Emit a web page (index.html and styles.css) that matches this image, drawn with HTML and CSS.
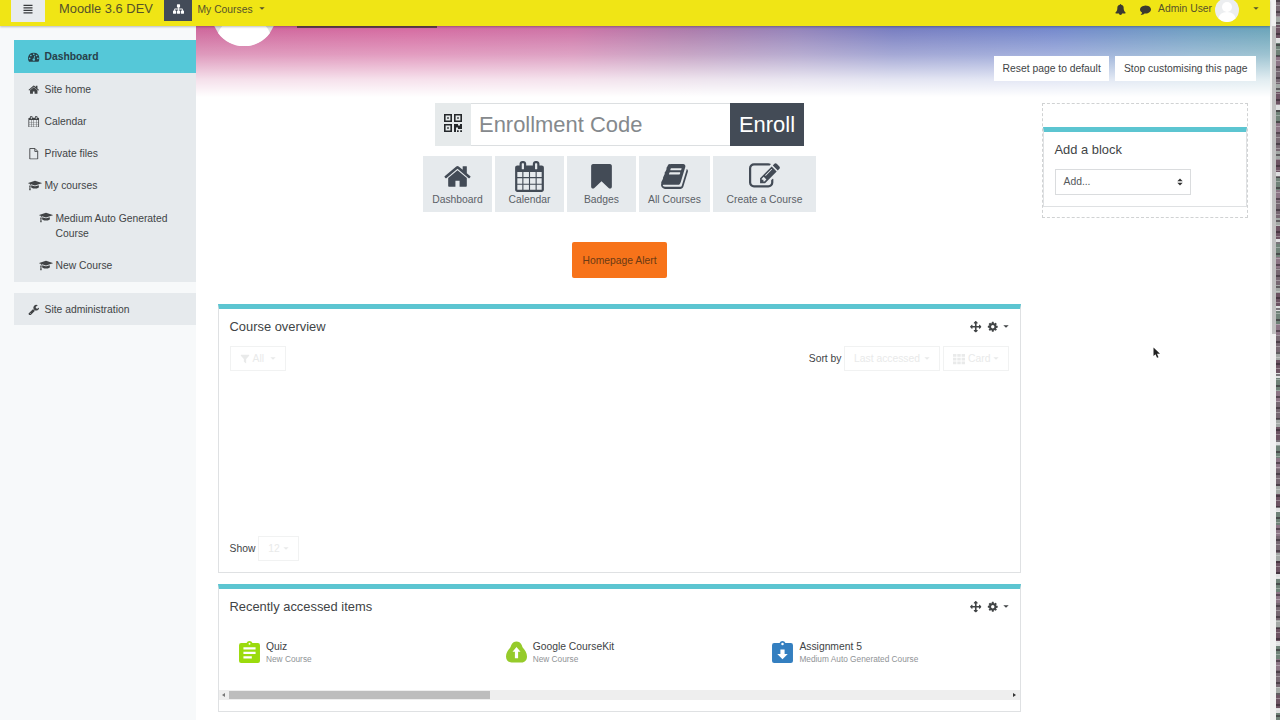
FILE: index.html
```html
<!DOCTYPE html>
<html lang="en">
<head>
    <meta charset="UTF-8">
    <meta name="viewport" content="width=device-width, initial-scale=1.0">
    <title>Dashboard</title>
    <link rel="stylesheet" href="styles.css">
</head>
<body>
    <svg class="sprite">
        <symbol id="home" viewBox="0 0 1792 1792"><path d="M1472 992v480q0 26-19 45t-45 19h-384v-384h-256v384h-384q-26 0-45-19t-19-45v-480q0-1 .5-3t.5-3l575-474 575 474q1 2 1 6zm223-69l-62 74q-8 9-21 11h-3q-13 0-21-7l-692-577-692 577q-12 8-24 7-13-2-21-11l-62-74q-8-10-7-23.5t11-21.5l719-599q32-26 76-26t76 26l244 204v-195q0-14 9-23t23-9h192q14 0 23 9t9 23v408l219 182q10 8 11 21.5t-7 23.5z"/></symbol>
        <symbol id="bookmark" viewBox="0 0 1792 1792"><path d="M1420 128q23 0 44 9 33 13 52.5 41t19.5 62v1289q0 34-19.5 62t-52.5 41q-19 8-44 8-48 0-83-32l-441-424-441 424q-36 33-83 33-23 0-44-9-33-13-52.5-41t-19.5-62v-1289q0-34 19.5-62t52.5-41q21-9 44-9h1048z"/></symbol>
        <symbol id="calendar" viewBox="0 0 1792 1792"><path d="M192 1664h288v-288h-288v288zm352 0h320v-288h-320v288zm-352-352h288v-320h-288v320zm352 0h320v-320h-320v320zm-352-384h288v-288h-288v288zm736 736h320v-288h-320v288zm-384-736h320v-288h-320v288zm768 736h288v-288h-288v288zm-384-352h320v-320h-320v320zm-352-864v-288q0-13-9.5-22.5t-22.5-9.5h-64q-13 0-22.5 9.5t-9.5 22.5v288q0 13 9.5 22.5t22.5 9.5h64q13 0 22.5-9.5t9.5-22.5zm736 864h288v-320h-288v320zm-384-384h320v-288h-320v288zm384 0h288v-288h-288v288zm32-480v-288q0-13-9.5-22.5t-22.5-9.5h-64q-13 0-22.5 9.5t-9.5 22.5v288q0 13 9.5 22.5t22.5 9.5h64q13 0 22.5-9.5t9.5-22.5zm384-64v1280q0 52-38 90t-90 38h-1408q-52 0-90-38t-38-90v-1280q0-52 38-90t90-38h128v-96q0-66 47-113t113-47h64q66 0 113 47t47 113v96h384v-96q0-66 47-113t113-47h64q66 0 113 47t47 113v96h128q52 0 90 38t38 90z"/></symbol>
        <symbol id="cap" viewBox="0 0 2304 1792"><path d="M1774 836l18 316q4 69-82 128t-235 93.5-323 34.5-323-34.5-235-93.5-82-128l18-316 574 181q22 7 48 7t48-7zm530-324q0 23-22 31l-1120 352q-4 1-10 1t-10-1l-652-206q-43 34-71 111.5t-34 178.5q63 36 63 109 0 69-58 107l58 433q2 14-8 25-9 11-24 11h-192q-15 0-24-11-10-11-8-25l58-433q-58-38-58-107 0-73 65-111 11-207 98-330l-333-104q-22-8-22-31t22-31l1120-352q4-1 10-1t10 1l1120 352q22 8 22 31z"/></symbol>
        <symbol id="wrench" viewBox="0 0 1792 1792"><path d="M448 1472q0-26-19-45t-45-19-45 19-19 45 19 45 45 19 45-19 19-45zm644-420l-682 682q-37 37-90 37-52 0-91-37l-106-108q-38-36-38-90 0-53 38-91l681-681q39 98 114.5 173.5t173.5 114.5zm634-435q0 39-23 106-47 134-164.5 217.5t-258.5 83.5q-185 0-316.5-131.5t-131.5-316.5 131.5-316.5 316.5-131.5q58 0 121.5 16.5t107.5 46.5q16 11 16 28t-16 28l-293 169v224l193 107q5-3 79-48.5t135.5-81 70.5-35.5q15 0 23.5 10t8.5 25z"/></symbol>
        <symbol id="bell" viewBox="0 0 1792 1792"><path d="M1728 1408q0 52-38 90t-90 38h-448q0 106-75 181t-181 75-181-75-75-181h-448q-52 0-90-38t-38-90q50-42 91-88t85-119.5 74.5-158.5 50-206 19.5-260q0-152 117-282.5t307-158.5q-8-19-8-39 0-40 28-68t68-28 68 28 28 68q0 20-8 39 190 28 307 158.5t117 282.5q0 139 19.5 260t50 206 74.5 158.5 85 119.5 91 88z"/></symbol>
        <symbol id="comment" viewBox="0 0 1792 1792"><path d="M1792 896q0 174-120 321.5t-326 233-450 85.5q-70 0-145-8-198 175-460 242-49 14-114 22-17 2-30.5-9t-17.5-29v-1q-3-4-.5-12t2-10 4.5-9.5l6-9 7-8.5 8-9q7-8 31-34.5t34.5-38 31-39.5 32.5-51 27-59 26-76q-157-89-247.5-220t-90.5-281q0-130 71-248.5t191-204.5 286-136.5 348-50.5q244 0 450 85.5t326 233 120 321.5z"/></symbol>
        <symbol id="sitemap" viewBox="0 0 1792 1792"><path d="M1792 1248v320q0 40-28 68t-68 28h-320q-40 0-68-28t-28-68v-320q0-40 28-68t68-28h96v-192h-512v192h96q40 0 68 28t28 68v320q0 40-28 68t-68 28h-320q-40 0-68-28t-28-68v-320q0-40 28-68t68-28h96v-192h-512v192h96q40 0 68 28t28 68v320q0 40-28 68t-68 28h-320q-40 0-68-28t-28-68v-320q0-40 28-68t68-28h96v-192q0-52 38-90t90-38h512v-192h-96q-40 0-68-28t-28-68v-320q0-40 28-68t68-28h320q40 0 68 28t28 68v320q0 40-28 68t-68 28h-96v192h512q52 0 90 38t38 90v192h96q40 0 68 28t28 68z"/></symbol>
        <symbol id="move" viewBox="0 0 1792 1792"><path d="M1792 896q0 26-19 45l-256 256q-19 19-45 19t-45-19-19-45v-128h-384v384h128q26 0 45 19t19 45-19 45l-256 256q-19 19-45 19t-45-19l-256-256q-19-19-19-45t19-45 45-19h128v-384h-384v128q0 26-19 45t-45 19-45-19l-256-256q-19-19-19-45t19-45l256-256q19-19 45-19t45 19 19 45v128h384v-384h-128q-26 0-45-19t-19-45 19-45l256-256q19-19 45-19t45 19l256 256q19 19 19 45t-19 45-45 19h-128v384h384v-128q0-26 19-45t45-19 45 19l256 256q19 19 19 45z"/></symbol>
        <symbol id="cog" viewBox="0 0 1792 1792"><path d="M1152 896q0-106-75-181t-181-75-181 75-75 181 75 181 181 75 181-75 75-181zm512-109v222q0 12-8 23t-20 13l-185 28q-19 54-39 91 35 50 107 138 10 12 10 25t-9 23q-27 37-99 108t-94 71q-12 0-26-9l-138-108q-44 23-91 38-16 136-29 186-7 28-36 28h-222q-14 0-24.5-8.5t-11.5-21.5l-28-184q-49-16-90-37l-141 107q-10 9-25 9-14 0-25-11-126-114-165-168-7-10-7-23 0-12 8-23 15-21 51-66.5t54-70.5q-27-50-41-99l-183-27q-13-2-21-12.5t-8-23.5v-222q0-12 8-23t19-13l186-28q14-46 39-92-40-57-107-138-10-12-10-24 0-10 9-23 26-36 98.5-107.5t94.5-71.5q13 0 26 10l138 107q44-23 91-38 16-136 29-186 7-28 36-28h222q14 0 24.5 8.5t11.5 21.5l28 184q49 16 90 37l142-107q9-9 24-9 13 0 25 10 129 119 165 170 7 8 7 22 0 12-8 23-15 21-51 66.5t-54 70.5q26 50 41 98l183 28q13 2 21 12.5t8 23.5z"/></symbol>
        <symbol id="book" viewBox="0 0 1792 1792"><path d="M1703 478q40 57 18 129l-275 906q-19 64-76.5 107.5t-122.5 43.5h-923q-77 0-148.5-53.5t-99.5-131.5q-24-67-2-127 0-4 3-27t4-37q1-8-3-21.5t-3-19.5q2-11 8-21t16.5-23.5 16.5-23.5q23-38 45-91.5t30-91.5q3-10 .5-30t-.5-28q3-11 17-28t17-23q21-36 42-92t25-90q1-9-2.5-32t.5-28q4-13 22-30.5t22-22.5q19-26 42.5-84.5t27.5-96.5q1-8-3-25.5t-2-26.5q2-8 9-18t18-23 17-21q8-12 16.5-30.5t15-35 16-36 19.5-32 26.5-23.5 36-11.5 47.5 5.5l-1 3q38-9 51-9h761q74 0 114 56t18 130l-274 906q-36 119-71.5 153.5t-128.5 34.5h-869q-27 0-38 15-11 16-1 43 24 70 144 70h923q29 0 56-15.5t35-41.5l300-987q7-22 5-57 38 15 59 43zm-1064 2q-4 13 2 22.5t20 9.5h608q13 0 25.5-9.5t16.5-22.5l21-64q4-13-2-22.5t-20-9.5h-608q-13 0-25.5 9.5t-16.5 22.5zm-83 256q-4 13 2 22.5t20 9.5h608q13 0 25.5-9.5t16.5-22.5l21-64q4-13-2-22.5t-20-9.5h-608q-13 0-25.5 9.5t-16.5 22.5z"/></symbol>
        <symbol id="edit" viewBox="0 0 1792 1792"><path d="M888 1184l116-116-152-152-116 116v56h96v96h56zm440-720q-16-16-33 1l-350 350q-17 17-1 33t33-1l350-350q17-17 1-33zm80 594v190q0 119-84.5 203.5t-203.5 84.5h-832q-119 0-203.5-84.5t-84.5-203.5v-832q0-119 84.5-203.5t203.5-84.5h832q63 0 117 25 15 7 18 23 3 17-9 29l-49 49q-14 14-32 8-23-6-45-6h-832q-66 0-113 47t-47 113v832q0 66 47 113t113 47h832q66 0 113-47t47-113v-126q0-13 9-22l64-64q15-15 35-7t20 29zm-96-738l288 288-672 672h-288v-288zm444 132l-92 92-288-288 92-92q28-28 68-28t68 28l152 152q28 28 28 68t-28 68z"/></symbol>
        <symbol id="gauge" viewBox="0 0 1792 1792"><path d="M384 1152q0-53-37.5-90.5t-90.5-37.5-90.5 37.5-37.5 90.5 37.5 90.5 90.5 37.5 90.5-37.5 37.5-90.5zm192-448q0-53-37.5-90.5t-90.5-37.5-90.5 37.5-37.5 90.5 37.5 90.5 90.5 37.5 90.5-37.5 37.5-90.5zm428 481l101-382q6-26-7.5-48.5t-38.5-29.5-48 6.5-30 39.5l-101 382q-60 5-107 43.5t-63 98.5q-20 77 20 146t117 89 146-20 89-117q16-60-6-117t-72-91zm660-33q0-53-37.5-90.5t-90.5-37.5-90.5 37.5-37.5 90.5 37.5 90.5 90.5 37.5 90.5-37.5 37.5-90.5zm-640-640q0-53-37.5-90.5t-90.5-37.5-90.5 37.5-37.5 90.5 37.5 90.5 90.5 37.5 90.5-37.5 37.5-90.5zm448 192q0-53-37.5-90.5t-90.5-37.5-90.5 37.5-37.5 90.5 37.5 90.5 90.5 37.5 90.5-37.5 37.5-90.5zm320 448q0 261-141 483-19 29-54 29h-1402q-35 0-54-29-141-221-141-483 0-182 71-348t191-286 286-191 348-71 348 71 286 191 191 286 71 348z"/></symbol>
        <symbol id="file" viewBox="0 0 14 14"><path d="M2.2 .6h6.3l3.3 3.3v9.5H2.2zM8.3 .8v3.4h3.4" fill="none" stroke="currentColor" stroke-width="1.1" stroke-linejoin="round"/></symbol>
        <symbol id="bars" viewBox="0 0 12 12"><path d="M1.500 1.700h9v1.300h-9zM1.500 4.200h9v1.300h-9zM1.500 6.700h9V8h-9zM1.500 9.200h9v1.300h-9z"/></symbol>
        <symbol id="filter" viewBox="0 0 12 12"><path d="M1 1h10v1L7.4 6v5.4L4.6 9.3V6L1 2z"/></symbol>
        <symbol id="th" viewBox="0 0 12 12"><path d="M0 1h3.4v2.8H0zM4.3 1h3.4v2.8H4.3zM8.6 1H12v2.8H8.6zM0 4.7h3.4v2.8H0zM4.3 4.7h3.4v2.8H4.3zM8.6 4.7H12v2.8H8.6zM0 8.4h3.4v2.8H0zM4.3 8.4h3.4v2.8H4.3zM8.6 8.4H12v2.8H8.6z"/></symbol>
        <symbol id="qr" viewBox="0 0 18 18">
            <path d="M.8 .8h6.4v6.4H.8zM10.8 .8h6.4v6.4h-6.4zM.8 10.8h6.4v6.4H.8z" fill="none" stroke="currentColor" stroke-width="1.6"/>
            <path d="M3.2 3.2h1.6v1.6H3.2zM13.2 3.2h1.6v1.6h-1.6zM3.2 13.2h1.6v1.6H3.2zM10 10h4v1.5h2V10h2v5h-4v-1.6h-2V18h-2zM13 16.2h1.7V18H13zM16.2 16.2H18V18h-1.8z"/>
        </symbol>
        <symbol id="quiz" viewBox="0 0 20 21">
            <path d="M2 2h5.2a3 3 0 0 1 5.6 0H18a2 2 0 0 1 2 2v15a2 2 0 0 1-2 2H2a2 2 0 0 1-2-2V4a2 2 0 0 1 2-2z" fill="#9bdb0d"/>
            <path d="M4.2 7h11.6M4.2 11.3h11.6M4.2 15.6h8" stroke="#fff" stroke-width="2"/>
            <circle cx="10" cy="2.6" r=".9" fill="#fff"/>
        </symbol>
        <symbol id="kit" viewBox="0 0 21 21">
            <path d="M10.500 0c2.300 0 3.900 1.100 4.900 2.900 .6 1.100 .8 2.400 1.700 3.500 1.900 2.200 3.900 4.900 3.900 8.600 0 3.600-2.100 6-5.500 6h-10C2.100 21 0 18.600 0 15c0-3.700 2-6.400 3.900-8.600 .9-1.100 1.100-2.400 1.700-3.500C6.600 1.100 8.200 0 10.500 0z" fill="#96cb2b"/>
            <path d="M10.500 5.500l4 4.800h-2.400v6.500H8.900v-6.500H6.500z" fill="#fff"/>
        </symbol>
        <symbol id="assign" viewBox="0 0 20 21">
            <path d="M2 2h5.200a3 3 0 0 1 5.600 0H18a2 2 0 0 1 2 2v15a2 2 0 0 1-2 2H2a2 2 0 0 1-2-2V4a2 2 0 0 1 2-2z" fill="#347fc0"/>
            <path d="M8 8h4v4.500h3l-5 5-5-5h3z" fill="#fff"/>
            <circle cx="10" cy="2.800" r="1.200" fill="#fff"/>
        </symbol>
    </svg>

    <div class="page">
        <header class="navbar">
            <button class="menu-btn"><svg class="icon"><use href="#bars"/></svg></button>
            <a class="brand">Moodle 3.6 DEV</a>
            <button class="tree-btn"><svg class="icon"><use href="#sitemap"/></svg></button>
            <a class="nav-link">My Courses <i class="caret"></i></a>
            <div class="user-menu">
                <svg class="icon bell"><use href="#bell"/></svg>
                <svg class="icon comment"><use href="#comment"/></svg>
                <span>Admin User</span>
                <svg class="avatar" viewBox="0 0 24 24"><circle cx="12" cy="12" r="12" fill="#eceef0"/><circle cx="12" cy="9" r="5" fill="#fff"/><path d="M3.500 20.500q1-6.500 8.500-6.500t8.500 6.500a12 12 0 0 1-17 0z" fill="#fff"/></svg>
                <i class="caret"></i>
            </div>
        </header>

        <div class="columns">
            <aside class="sidebar">
                <nav class="nav-group">
                    <a class="active"><svg class="icon"><use href="#gauge"/></svg>Dashboard</a>
                    <a><svg class="icon"><use href="#home"/></svg>Site home</a>
                    <a><svg class="icon"><use href="#calendar"/></svg>Calendar</a>
                    <a><svg class="icon"><use href="#file"/></svg>Private files</a>
                    <a><svg class="icon cap"><use href="#cap"/></svg>My courses</a>
                    <a class="sub"><svg class="icon cap"><use href="#cap"/></svg><span>Medium Auto Generated<br>Course</span></a>
                    <a class="sub"><svg class="icon cap"><use href="#cap"/></svg><span>New Course</span></a>
                </nav>
                <nav class="nav-group">
                    <a><svg class="icon"><use href="#wrench"/></svg>Site administration</a>
                </nav>
            </aside>

            <main class="main">
                <div class="hero">
                    <svg class="profile" viewBox="0 0 64 64"><circle cx="32" cy="32" r="32" fill="#e0e2e1"/><path d="M6 51q5-14 26-14t26 14a32 32 0 0 1-52 0z" fill="#fff"/></svg>
                    <div class="hero-name"></div>
                    <div class="hero-buttons">
                        <button>Reset page to default</button>
                        <button>Stop customising this page</button>
                    </div>
                </div>

                <div class="content">
                    <div class="center">
                        <div class="enroll">
                            <span class="enroll-icon"><svg class="icon"><use href="#qr"/></svg></span>
                            <span class="enroll-input">Enrollment Code</span>
                            <button class="enroll-btn">Enroll</button>
                        </div>

                        <div class="tiles">
                            <a class="tile"><svg class="icon"><use href="#home"/></svg>Dashboard</a>
                            <a class="tile tile-calendar"><svg class="icon"><use href="#calendar"/></svg>Calendar</a>
                            <a class="tile"><svg class="icon"><use href="#bookmark"/></svg>Badges</a>
                            <a class="tile tile-courses"><svg class="icon"><use href="#book"/></svg>All Courses</a>
                            <a class="tile tile-create"><svg class="icon"><use href="#edit"/></svg>Create a Course</a>
                        </div>

                        <div class="alert">Homepage Alert</div>

                        <section class="card overview">
                            <div class="card-head">
                                <h2>Course overview</h2>
                                <div class="card-tools"><svg class="icon"><use href="#move"/></svg><svg class="icon"><use href="#cog"/></svg><i class="caret"></i></div>
                            </div>
                            <div class="filters">
                                <span class="faded all"><svg class="icon"><use href="#filter"/></svg>All<i class="caret"></i></span>
                                <label>Sort by</label>
                                <span class="faded last">Last accessed<i class="caret"></i></span>
                                <span class="faded view"><svg class="icon"><use href="#th"/></svg>Card<i class="caret"></i></span>
                            </div>
                            <div class="show">
                                <label>Show</label>
                                <span class="faded count">12<i class="caret"></i></span>
                            </div>
                        </section>

                        <section class="card recent">
                            <div class="card-head">
                                <h2>Recently accessed items</h2>
                                <div class="card-tools"><svg class="icon"><use href="#move"/></svg><svg class="icon"><use href="#cog"/></svg><i class="caret"></i></div>
                            </div>
                            <div class="items">
                                <div class="item"><svg><use href="#quiz"/></svg><div>Quiz<small>New Course</small></div></div>
                                <div class="item"><svg><use href="#kit"/></svg><div>Google CourseKit<small>New Course</small></div></div>
                                <div class="item"><svg><use href="#assign"/></svg><div>Assignment 5<small>Medium Auto Generated Course</small></div></div>
                            </div>
                            <div class="hscroll"><i class="arrow left"></i><div class="track"><div class="thumb"></div></div><i class="arrow right"></i></div>
                        </section>
                    </div>

                    <aside class="blocks">
                        <section class="card add-block">
                            <h2>Add a block</h2>
                            <div class="select">Add...<svg viewBox="0 0 6 8"><path d="M3 .5l2.700 2.800H.3zM3 7.500L.3 4.700h5.400z"/></svg></div>
                        </section>
                    </aside>
                </div>
            </main>
        </div>
    </div>
    <div class="scrollbar"><div class="scroll-thumb"></div></div>
    <div class="edge"></div>
    <svg class="cursor" viewBox="0 0 8 12"><path d="M.5 .5v8.500l2-1.700 1.500 3.500 1.500-.6-1.500-3.400h3z"/></svg>
</body>
</html>
```
FILE: styles.css
```css
* {
    box-sizing: border-box;
}
body {
    display: flex;
    height: 720px;
    margin: 0;
    overflow: hidden;
    background: #fff;
    color: #414446;
    font-family: "Liberation Sans", Arial, sans-serif;
    font-size: 10.33px;
    line-height: 15.3px;
    white-space: nowrap;
}
button {
    padding: 0;
    border: 0;
    color: inherit;
    font: inherit;
}
h2 {
    margin: 0;
    font-size: 12.9px;
    font-weight: normal;
    line-height: 16px;
}
.sprite {
    display: none;
}
.icon {
    width: 12px;
    height: 12px;
    fill: currentColor;
    flex: none;
}
.caret {
    width: 0;
    height: 0;
    border: 2.5px solid transparent;
    border-width: 3px 3px 0;
    border-top-color: currentColor;
    transform: scale(.9);
}
.page {
    width: 1270px;
    flex: none;
}

/* top bar */
.navbar {
    display: flex;
    height: 26px;
    padding-left: 11px;
    background: #f0e515;
    color: #55522a;
    position: relative;
    z-index: 1;
    box-shadow: 0 1px 2px rgba(0, 0, 0, .25);
}
.menu-btn {
    width: 34px;
    height: 22px;
    padding-bottom: 4px;
    background: #e8ebee;
    color: #373a3c;
}
.menu-btn .icon,
.tree-btn .icon {
    display: block;
    margin: 0 auto;
}
.brand {
    width: 119px;
    padding: 1px 0 0 14px;
    font-size: 12.9px;
}
.tree-btn {
    width: 28px;
    height: 21px;
    padding-bottom: 3px;
    background: #434b58;
    color: #fff;
}
.tree-btn .icon {
    width: 11px;
}
.nav-link {
    display: flex;
    align-items: center;
    gap: 6px;
    height: 19px;
    padding-left: 5.5px;
}
.nav-link .caret {
    margin-top: -2px;
}
.user-menu {
    display: flex;
    align-items: center;
    height: 18px;
    margin-left: auto;
    padding-right: 11px;
}
.user-menu .icon {
    width: 11px;
    height: 11px;
    color: #3c3a30;
}
.user-menu .bell {
    margin-right: 14px;
}
.user-menu .comment {
    margin-right: 7px;
}
.avatar {
    width: 24px;
    height: 24px;
    margin: 1px 14px 0 3px;
}
.user-menu .caret {
    margin-top: -2px;
}

/* layout */
.columns {
    display: flex;
    height: 694px;
}
.sidebar {
    width: 196px;
    flex: none;
    padding: 14px 0 0 14px;
    background: #f7f9fa;
}
.nav-group {
    margin-bottom: 11px;
    background: #e6eaed;
}
.nav-group a {
    display: flex;
    min-height: 32.3px;
    padding: 9px 0 8px 14px;
}
.nav-group .icon {
    width: 11.5px;
    height: 11.5px;
    margin: 2px 5px 0 0;
}
.nav-group .cap {
    width: 14px;
    height: 11px;
    margin: 1.5px 2.5px 0 0;
}
.nav-group .sub {
    padding-left: 25px;
}
.nav-group .active {
    height: 32.5px;
    background: #55c8d8;
    color: #28404a;
    font-weight: bold;
}
.main {
    flex: 1;
}
.hero {
    display: flex;
    align-items: flex-start;
    height: 71px;
    padding-left: 16px;
    overflow: hidden;
    background:
        linear-gradient(rgba(255, 255, 255, 0), rgba(255, 255, 255, .35) 40%, rgba(255, 255, 255, .8) 75%, #fff),
        linear-gradient(90deg, #cd6499, #d4689f 20%, #cc70a4 35%, #a977a8 46%, #9180b8 56%, #747abf 65%, #7186cb 80%, #6b9cc0 93%, #68a3b8);
}
.profile {
    width: 64px;
    height: 64px;
    margin-top: -44px;
}
.hero-name {
    width: 140px;
    height: 2px;
    margin-left: 21px;
    background: #65404f;
}
.hero-buttons {
    display: flex;
    gap: 6px;
    margin: 30px 14px 0 auto;
}
.hero-buttons button {
    height: 25px;
    padding: 1px 8.6px 0;
    background: #fff;
}
.content {
    display: flex;
    align-items: flex-start;
    gap: 21px;
    padding: 6px 0 0 22px;
}
.center {
    width: 803px;
}

/* enrollment */
.enroll {
    display: flex;
    width: 369px;
    height: 43px;
    margin: 0 auto;
    font-size: 21.95px;
    line-height: 42px;
}
.enroll-icon {
    width: 36px;
    padding: 11px 9px;
    background: #e6eaeb;
    line-height: 0;
}
.enroll-icon .icon {
    width: 18px;
    height: 18px;
    color: #25282b;
}
.enroll-input {
    flex: 1;
    padding-left: 8px;
    border-top: 1px solid #dcdfe1;
    border-bottom: 1px solid #dcdfe1;
    color: #85898d;
    line-height: 41px;
}
.enroll-btn {
    width: 74px;
    background: #434b56;
    color: #fff;
    line-height: 41px;
    padding-bottom: 1px;
}
.tiles {
    display: flex;
    justify-content: center;
    gap: 3px;
    margin-top: 10px;
}
.tile {
    display: flex;
    flex-direction: column;
    align-items: center;
    justify-content: flex-end;
    width: 69px;
    height: 56px;
    padding-bottom: 4.7px;
    background: #e6eaed;
    color: #5b6167;
}
.tile .icon {
    width: 29px;
    height: 29px;
    margin-bottom: 1px;
    color: #434b56;
}
.tile-calendar .icon {
    width: 31px;
    height: 31px;
    margin-bottom: 0;
}
.tile-courses {
    width: 71px;
}
.tile-create {
    width: 103px;
}
.tile-create .icon {
    width: 31px;
    height: 31px;
    margin-bottom: 0;
}
.alert {
    width: 95px;
    height: 36px;
    margin: 30px auto 26px;
    border-radius: 2px;
    background: #f7731a;
    color: #6b3a14;
    text-align: center;
    line-height: 37px;
}

/* cards */
.card {
    border: 1px solid #dfe1e3;
    border-top: 5px solid #5cc5d1;
    background: #fff;
}
.card-head {
    display: flex;
    justify-content: space-between;
    align-items: center;
}
.card-tools {
    display: flex;
    align-items: center;
    gap: 5px;
}
.card-tools .icon {
    width: 11.5px;
    height: 11.5px;
}
.card-tools .caret {
    margin-top: -2px;
}
.faded {
    display: flex;
    align-items: center;
    height: 25px;
    padding: 0 9px;
    border: 1px solid #f1f2f2;
    color: #e9eaea;
}
.faded .caret {
    margin-left: auto;
}
.faded .icon {
    margin-right: 3px;
}
.overview {
    height: 269px;
    padding: 10px 11px 0 10.5px;
}
.filters {
    display: flex;
    align-items: center;
    margin-top: 11px;
}
.all {
    width: 56px;
    margin-right: auto;
}
.all .icon {
    width: 10px;
}
.last {
    width: 96px;
    margin: 0 3px 0 2.5px;
}
.view {
    width: 66px;
}
.show {
    display: flex;
    align-items: center;
    gap: 3px;
    margin-top: 165px;
}
.count {
    width: 41px;
}
.recent {
    height: 128px;
    margin-top: 11px;
    padding-top: 10px;
}
.recent .card-head {
    padding: 0 11px 0 10.5px;
}
.items {
    display: flex;
    padding: 25px 0 0 20px;
}
.item {
    display: flex;
    flex: none;
    gap: 6px;
    width: 266.7px;
    line-height: 14px;
}
.items .item:last-child {
    width: 240px;
}
.item svg {
    width: 21px;
    height: 22px;
    margin-top: 1px;
}
.item small {
    display: block;
    color: #8f9396;
    font-size: 8.3px;
    line-height: 11px;
}
.hscroll {
    display: flex;
    align-items: center;
    height: 10px;
    margin-top: 25px;
    background: #eee;
}
.track {
    flex: 1;
    height: 8px;
    margin: 0 3px 0 4px;
}
.thumb {
    width: 261px;
    height: 8px;
    background: #bdbdbd;
}
.arrow {
    border: 2px solid transparent;
}
.left {
    margin-left: 3px;
    border-left-width: 0;
    border-right: 3px solid #777;
}
.right {
    margin-right: 4px;
    border-right-width: 0;
    border-left: 3px solid #333;
}
.blocks {
    width: 206px;
    height: 115px;
    padding-top: 23px;
    border: 1px dashed #d0d2d3;
}
.add-block {
    height: 80px;
    padding: 10px 10.5px;
}
.select {
    display: flex;
    align-items: center;
    justify-content: space-between;
    width: 136px;
    height: 26px;
    margin-top: 11px;
    padding: 0 7px 0 8px;
    border: 1px solid #dadcde;
    color: #55595c;
}
.select svg {
    width: 6px;
    height: 8px;
    fill: #333;
}

/* window edge */
.scrollbar {
    width: 6px;
    padding: 26px 0 0 2px;
    background: #f1f1f1;
}
.scroll-thumb {
    height: 308px;
    background: #c1c1c1;
}
.edge {
    width: 4px;
    background:
        repeating-linear-gradient(rgba(40, 30, 38, .55) 0 2px, transparent 2px 5px, rgba(255, 255, 255, .3) 5px 6px, transparent 6px 11px),
        repeating-linear-gradient(#776872 0 17px, #a3a8a5 17px 25px, #6c5362 25px 38px, #dedfe0 38px 43px, #708278 43px 56px, #8c7585 56px 67px);
}
.cursor {
    position: absolute;
    left: 1153px;
    top: 347px;
    width: 8px;
    height: 12px;
    fill: #222;
}
```
